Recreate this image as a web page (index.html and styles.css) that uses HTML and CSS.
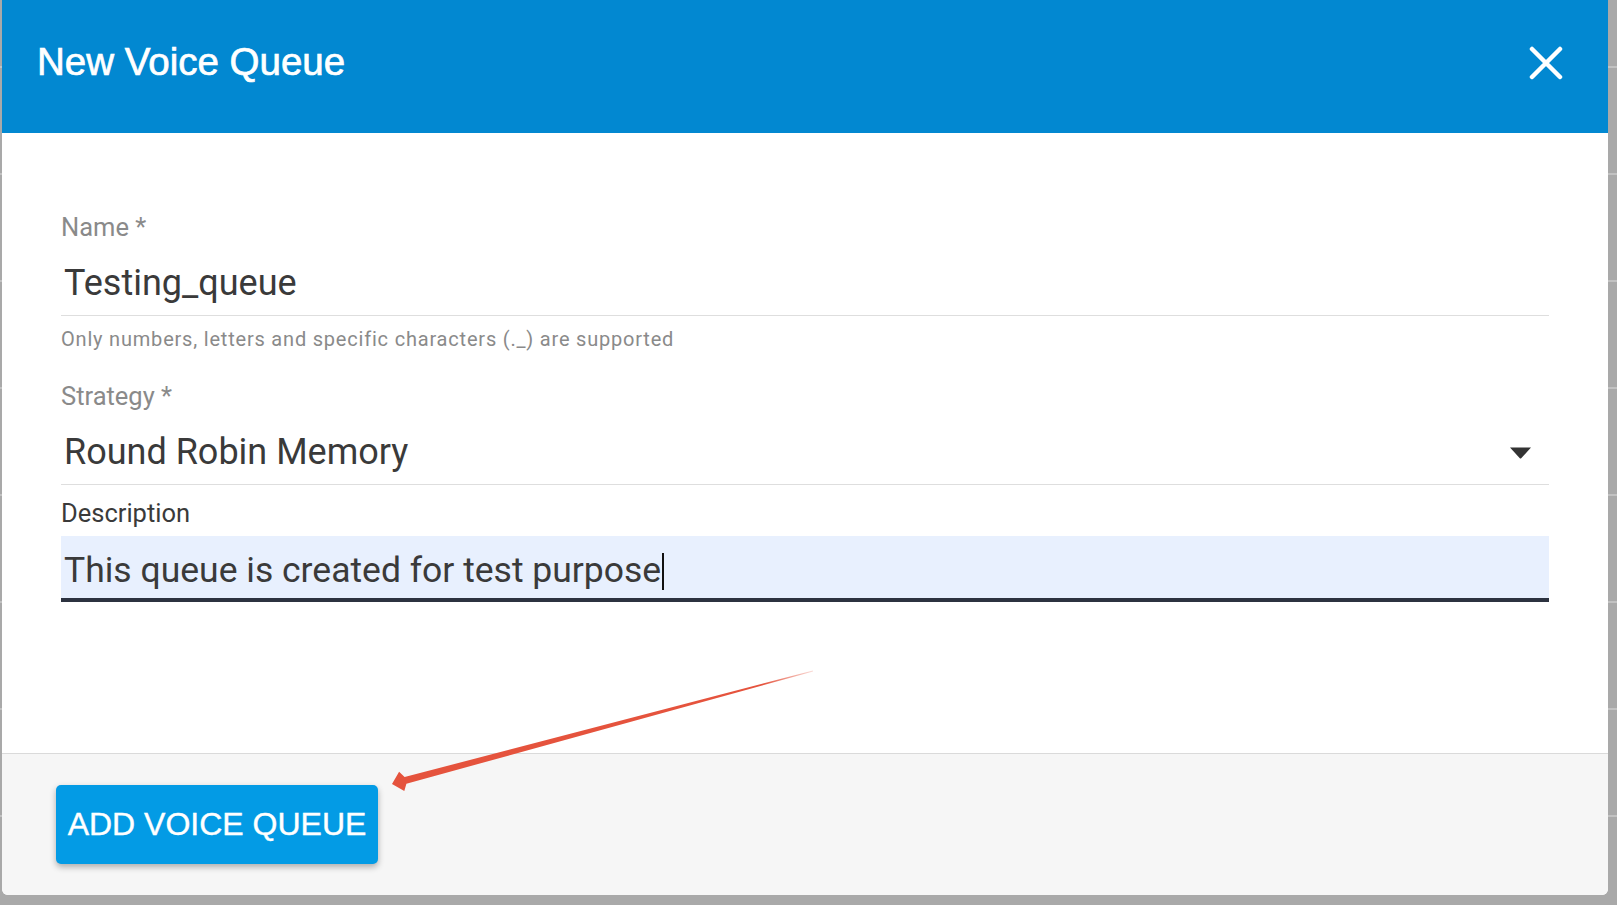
FILE: index.html
```html
<!DOCTYPE html>
<html lang="en">
<head>
    <title>New Voice Queue</title>
    <link rel="stylesheet" href="styles.css">
</head>
<body>
    <div class="dialog">
        <div class="dialog-header">
            <h1 class="dialog-title">New Voice Queue</h1>
            <svg class="close-icon" width="34" height="34" viewBox="0 0 34 34">
                <path d="M3 3L31 31M31 3L3 31" stroke="#fff" stroke-width="4.5" stroke-linecap="round" fill="none"/>
            </svg>
        </div>
        <div class="dialog-body">
            <div class="field">
                <label class="field-label">Name *</label>
                <div class="field-input">Testing_queue</div>
                <p class="field-helper">Only numbers, letters and specific characters (._) are supported</p>
            </div>
            <div class="field field-select">
                <label class="field-label">Strategy *</label>
                <div class="field-input">
                    <span>Round Robin Memory</span>
                    <svg class="select-arrow" width="21" height="12" viewBox="0 0 21 12">
                        <path d="M0 0.5H21L11.2 11.2Q10.5 12 9.8 11.2Z" fill="#333"/>
                    </svg>
                </div>
            </div>
            <div class="field field-filled">
                <label class="field-label">Description</label>
                <div class="field-input">This queue is created for test purpose<span class="caret"></span></div>
            </div>
        </div>
        <div class="dialog-footer">
            <button class="btn-primary">ADD VOICE QUEUE</button>
        </div>
    </div>

    <!-- red annotation arrow pointing at the button -->
    <svg class="annotation" width="1617" height="905" viewBox="0 0 1617 905">
        <defs>
            <linearGradient id="fade" x1="813" y1="671" x2="392" y2="784" gradientUnits="userSpaceOnUse">
                <stop offset="0" stop-color="#e5533d" stop-opacity="0.2"/>
                <stop offset="0.12" stop-color="#e5533d"/>
                <stop offset="1" stop-color="#e5533d"/>
            </linearGradient>
        </defs>
        <polygon points="392,784 399.1,771.7 404.6,777 812.9,670.6 813.1,671.4 406.4,783.8 404.3,791.1" fill="url(#fade)"/>
    </svg>
</body>
</html>
```

FILE: styles.css
```css
body {
    margin: 0;
    height: 905px;
    overflow: hidden;
    font-family: Roboto, "Liberation Sans", sans-serif;
    background: repeating-linear-gradient(to bottom, #a9a9a9 0 66px, #c2c2c2 66px 68px, #a9a9a9 68px 107px);
}
.dialog {
    margin-left: 2px;
    width: 1606px;
    height: 895px;
    display: flex;
    flex-direction: column;
    background-color: white;
    border-radius: 0 0 6px 6px;
    overflow: hidden;
}
.dialog-header {
    box-sizing: border-box;
    height: 133px;
    padding: 43px 45px 0 35px;
    display: flex;
    justify-content: space-between;
    align-items: flex-start;
    background-color: #0288d1;
}
.dialog-title {
    margin: 0;
    font-family: "Liberation Sans", Arial, sans-serif;
    font-weight: normal;
    font-size: 38.5px;
    line-height: 37px;
    color: white;
    -webkit-text-stroke: 0.7px white;
}
.close-icon {
    margin-top: 3px;
}
.dialog-body {
    flex: 1;
    padding: 80px 59px 0 59px;
}
.field-label {
    display: block;
    font-size: 25.5px;
    line-height: 29px;
    color: #8a8a8a;
}
.field-input {
    margin-top: 21px;
    padding: 0 3px 11px 3px;
    font-size: 36px;
    line-height: 41px;
    color: #3a3a3a;
    border-bottom: 1px solid #dedede;
}
.field-helper {
    margin: 12px 0 0;
    font-size: 20px;
    line-height: 22px;
    letter-spacing: 0.8px;
    color: #8a8a8a;
}
.field-select {
    margin-top: 32px;
}
.field-select .field-input {
    display: flex;
    justify-content: space-between;
    align-items: center;
}
.select-arrow {
    margin-right: 15px;
}
.field-filled {
    margin-top: 14px;
}
.field-filled .field-label {
    color: #3a3a3a;
}
.field-filled .field-input {
    margin-top: 8px;
    padding: 14px 3px 7px 3px;
    font-size: 35.5px;
    background-color: #e8f0fe;
    border-bottom: 4px solid #2c3240;
}
.caret {
    display: inline-block;
    width: 2px;
    height: 37px;
    margin-left: 1px;
    vertical-align: -8px;
    background-color: #111;
}
.dialog-footer {
    box-sizing: border-box;
    height: 142px;
    padding: 31px 0 0 54px;
    background-color: #f6f6f6;
    border-top: 1px solid #dadada;
}
.btn-primary {
    width: 322px;
    height: 79px;
    padding: 0;
    border: none;
    border-radius: 5px;
    background-color: #039be5;
    color: white;
    font-family: "Liberation Sans", Arial, sans-serif;
    font-size: 32px;
    -webkit-text-stroke: 0.4px white;
    box-shadow: rgba(0, 0, 0, 0.3) 0px 3px 6px;
    cursor: pointer;
}
.annotation {
    position: absolute;
    top: 0;
    left: 0;
    pointer-events: none;
}
```
